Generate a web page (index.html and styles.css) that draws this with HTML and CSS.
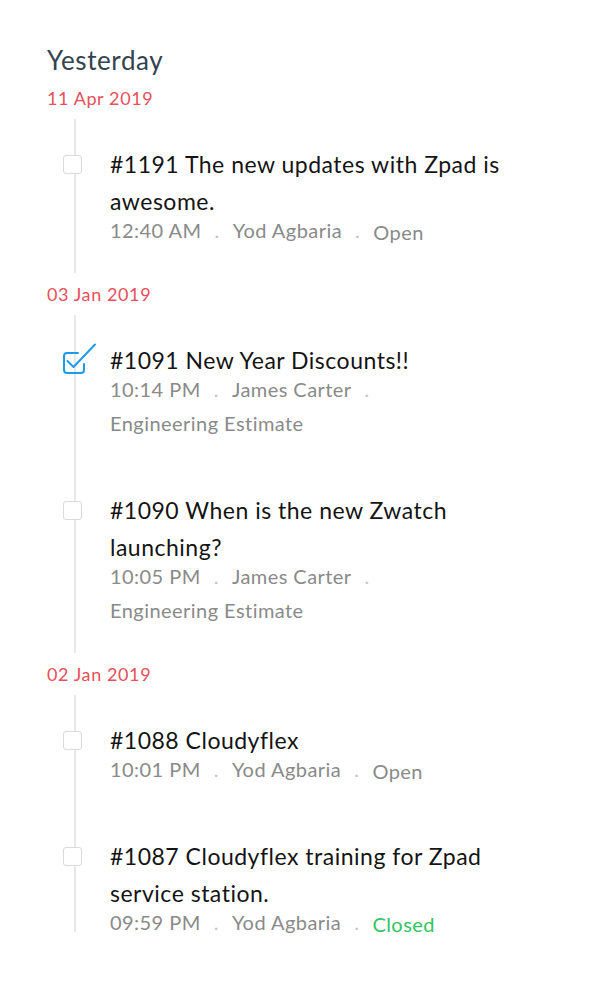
FILE: index.html
```html
<!DOCTYPE html>
<html>
<head>
<meta charset="utf-8">
<link rel="stylesheet" href="styles.css">
</head>
<body>
<div class="page">
  <h2 class="day">Yesterday</h2>

  <div class="date">11 Apr 2019</div>
  <div class="timeline">
    <div class="item">
      <div class="check"><span class="box"></span></div>
      <div class="body">
        <div class="title">#1191 The new updates with Zpad is awesome.</div>
        <div class="meta"><span>12:40 AM</span><span class="sep">.</span><span>Yod Agbaria</span><span class="sep">.</span><span class="status">Open</span></div>
      </div>
    </div>
  </div>

  <div class="date">03 Jan 2019</div>
  <div class="timeline">
    <div class="item">
      <div class="check">
        <svg class="checked" width="34" height="32" viewBox="0 0 34 32" fill="none" stroke="#1e9be8" stroke-width="2" stroke-linecap="round" stroke-linejoin="round">
          <path d="M15 11 H4 a3 3 0 0 0 -3 3 V28 a3 3 0 0 0 3 3 H18 a3 3 0 0 0 3 -3 V22"/>
          <path d="M4.5 19 L10.5 25 L32 2.5"/>
        </svg>
      </div>
      <div class="body">
        <div class="title">#1091 New Year Discounts!!</div>
        <div class="meta"><span>10:14 PM</span><span class="sep">.</span><span>James Carter</span><span class="sep">.</span><span>Engineering Estimate</span></div>
      </div>
    </div>
    <div class="item">
      <div class="check"><span class="box"></span></div>
      <div class="body">
        <div class="title">#1090 When is the new Zwatch launching?</div>
        <div class="meta"><span>10:05 PM</span><span class="sep">.</span><span>James Carter</span><span class="sep">.</span><span>Engineering Estimate</span></div>
      </div>
    </div>
  </div>

  <div class="date">02 Jan 2019</div>
  <div class="timeline timeline-last">
    <div class="item">
      <div class="check"><span class="box"></span></div>
      <div class="body">
        <div class="title">#1088 Cloudyflex</div>
        <div class="meta"><span>10:01 PM</span><span class="sep">.</span><span>Yod Agbaria</span><span class="sep">.</span><span class="status">Open</span></div>
      </div>
    </div>
    <div class="item">
      <div class="check"><span class="box"></span></div>
      <div class="body">
        <div class="title">#1087 Cloudyflex training for Zpad service station.</div>
        <div class="meta"><span>09:59 PM</span><span class="sep">.</span><span>Yod Agbaria</span><span class="sep">.</span><span class="status closed">Closed</span></div>
      </div>
    </div>
  </div>
</div>
</body>
</html>
```

FILE: styles.css
```css
html, body {
  margin: 0;
  padding: 0;
  background: #ffffff;
}

.page {
  font-family: Lato, "Noto Sans", sans-serif;
  padding: 45px 55px 70px 47px;
}

.day {
  margin: 0;
  font-size: 26px;
  line-height: 30px;
  letter-spacing: 0.6px;
  font-weight: 400;
  color: #34434f;
}

.date {
  font-size: 18px;
  line-height: 22px;
  letter-spacing: 0.6px;
  color: #e8505b;
  margin: 10px 0;
}

.day + .date {
  margin-top: 12px;
}

.timeline {
  margin-left: 27px;
  border-left: 2px solid #e8e8e8;
  padding: 27px 0 33px 0;
  display: flex;
  flex-direction: column;
  gap: 59px;
}

.timeline-last {
  padding-bottom: 0;
}

.item {
  display: flex;
  align-items: flex-start;
}

.check {
  flex: 0 0 34px;
  margin-left: -13px;
  margin-right: 13px;
  display: flex;
  flex-direction: column;
}

.box {
  display: block;
  width: 17px;
  height: 17px;
  margin-top: 9px;
  border: 1.5px solid #dadada;
  border-radius: 3px;
  background: #fff;
}

.checked {
  display: block;
  background: transparent;
}

.body {
  flex: 1;
  min-width: 0;
}

.title {
  font-size: 23px;
  line-height: 37px;
  letter-spacing: 0.5px;
  color: #141414;
}

.meta {
  display: flex;
  flex-wrap: wrap;
  row-gap: 14px;
  font-size: 20px;
  line-height: 20px;
  letter-spacing: 0.45px;
  color: #8a8a8a;
  white-space: nowrap;
}

.sep {
  color: #c4c4c4;
  margin: 0 13px;
}

.status {
  position: relative;
  top: 2px;
}

.closed {
  color: #34c463;
}
```
